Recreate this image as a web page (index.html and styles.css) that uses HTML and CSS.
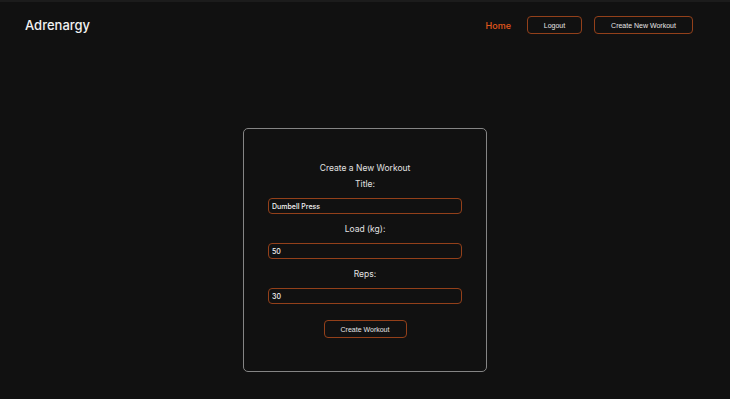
FILE: index.html
```html
<!DOCTYPE html>
<html lang="en">

<head>
    <meta charset="UTF-8">
    <meta name="viewport" content="width=device-width, initial-scale=1.0">
    <title>Adrenargy</title>
    <link rel="stylesheet" href="styles.css">
</head>

<body>

    <!-- NAVBAR -->
    <nav class="navbar">
        <a class="logo" href="#">Adrenargy</a>
        <div class="nav-links">
            <a class="home" href="#">Home</a>
            <button class="nav-btn logout">Logout</button>
            <button class="nav-btn create-new">Create New Workout</button>
        </div>
    </nav>

    <!-- WORKOUT FORM -->
    <main class="content">
        <form class="workout-form" onsubmit="return false;">
            <h3>Create a New Workout</h3>

            <label class="first">Title:</label>
            <input type="text" value="Dumbell Press">

            <label>Load (kg):</label>
            <input type="number" value="50">

            <label>Reps:</label>
            <input type="number" value="30">

            <button class="submit-btn">Create Workout</button>
        </form>
    </main>

</body>

</html>
```

FILE: styles.css
```css
* {
    box-sizing: border-box;
}

body {
    margin: 0;
    background-color: #111111;
    color: #e2e2e2;
    font-family: "Inter", "Open Sans", sans-serif;
    border-top: 2px solid #1c1c1c;
}

.navbar {
    display: flex;
    justify-content: space-between;
    align-items: center;
    height: 46px;
    padding: 0 37px 0 25px;
}

.logo {
    color: #f2f2f2;
    font-size: 13px;
    font-weight: 500;
    text-decoration: none;
}

.nav-links {
    display: flex;
    align-items: center;
}

.home {
    color: #e2581c;
    font-size: 9px;
    font-weight: 500;
    text-decoration: none;
    margin-right: 16px;
}

.nav-btn {
    height: 18px;
    padding: 0;
    background: transparent;
    color: #e6e6e6;
    border: 1px solid #93401a;
    border-radius: 4px;
    font-family: "Liberation Sans", Arial, sans-serif;
    font-size: 7px;
    cursor: pointer;
}

.logout {
    width: 55px;
    margin-right: 12px;
}

.create-new {
    width: 99px;
}

.content {
    display: flex;
    justify-content: center;
    padding-top: 80px;
}

.workout-form {
    display: flex;
    flex-direction: column;
    align-items: center;
    width: 244px;
    height: 244px;
    padding: 33px 24px 0;
    border: 1px solid #858585;
    border-radius: 5px;
    text-align: center;
}

.workout-form h3 {
    margin: 0;
    font-size: 8.5px;
    font-weight: 400;
    line-height: 12px;
}

.workout-form label {
    display: block;
    margin: 9px 0 8px;
    font-size: 8.5px;
    line-height: 12px;
}

.workout-form label.first {
    margin-top: 4px;
}

.workout-form input {
    width: 194px;
    height: 16px;
    padding: 0 3px;
    background: #111111;
    color: #f4f4f4;
    border: 1px solid #93401a;
    border-radius: 4px;
    font-family: "Inter", sans-serif;
    font-size: 7px;
    font-weight: 500;
    outline: none;
}

.workout-form input::-webkit-outer-spin-button,
.workout-form input::-webkit-inner-spin-button {
    -webkit-appearance: none;
    margin: 0;
}

.submit-btn {
    width: 83px;
    height: 18px;
    margin-top: 16px;
    padding: 0;
    background: transparent;
    color: #e6e6e6;
    border: 1px solid #93401a;
    border-radius: 4px;
    font-family: "Liberation Sans", Arial, sans-serif;
    font-size: 7px;
    cursor: pointer;
}
```
